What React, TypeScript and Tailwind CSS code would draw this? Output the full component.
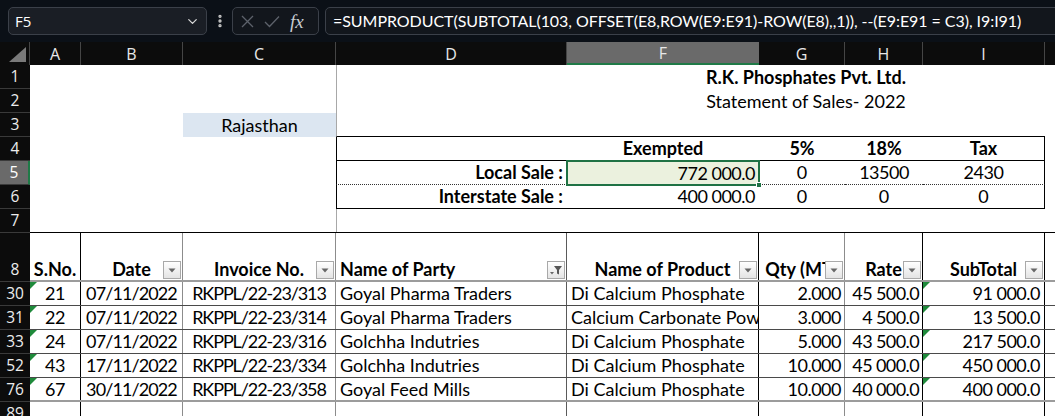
import { ChevronDown, EllipsisVertical } from 'lucide-react'

const ROWS = [
  { n: 30, sno: '21', date: '07/11/2022', inv: 'RKPPL/22-23/313', party: 'Goyal Pharma Traders', product: 'Di Calcium Phosphate', qty: '2.000', rate: '45 500.0', sub: '91 000.0' },
  { n: 31, sno: '22', date: '07/11/2022', inv: 'RKPPL/22-23/314', party: 'Goyal Pharma Traders', product: 'Calcium Carbonate Powder', qty: '3.000', rate: '4 500.0', sub: '13 500.0' },
  { n: 33, sno: '24', date: '07/11/2022', inv: 'RKPPL/22-23/316', party: 'Golchha Indutries', product: 'Di Calcium Phosphate', qty: '5.000', rate: '43 500.0', sub: '217 500.0' },
  { n: 52, sno: '43', date: '17/11/2022', inv: 'RKPPL/22-23/334', party: 'Golchha Indutries', product: 'Di Calcium Phosphate', qty: '10.000', rate: '45 000.0', sub: '450 000.0' },
  { n: 76, sno: '67', date: '30/11/2022', inv: 'RKPPL/22-23/358', party: 'Goyal Feed Mills', product: 'Di Calcium Phosphate', qty: '10.000', rate: '40 000.0', sub: '400 000.0' },
]

function RowHead({ children, className = '' }: { children: React.ReactNode; className?: string }) {
  return (
    <div className={`w-[30px] shrink-0 flex items-center justify-center border-b border-[#3a3a3a] bg-[#0c0c0c] font-['Open_Sans',sans-serif] text-[15.5px] text-[#ececec] ${className}`}>
      {children}
    </div>
  )
}

function FilterBtn({ active = false }: { active?: boolean }) {
  return (
    <span className="absolute right-[1px] bottom-[1px] w-[18px] h-[18px] border border-[#a9a9a9] bg-gradient-to-b from-white to-[#e4e4e4] flex items-center justify-center">
      {active ? (
        <svg width="14" height="12" viewBox="0 0 14 12">
          <path d="M1 8 h4 l-2 2.5z" fill="#666" />
          <path d="M5 2 h8 l-3 4 v4.5 l-2 -1 v-3.5z" fill="#555" />
        </svg>
      ) : (
        <svg width="8" height="5" viewBox="0 0 8 5">
          <path d="M0.5 0.5 h7 l-3.5 4z" fill="#666" />
        </svg>
      )}
    </span>
  )
}

function Tri() {
  return <span className="absolute left-0 top-0 w-0 h-0 border-t-[7px] border-r-[7px] border-t-[#1f8a3b] border-r-transparent" />
}

export default function App() {
  return (
    <div className="w-[1055px] h-[416px] overflow-hidden bg-white font-['Lato','Liberation_Sans',sans-serif] text-[18px] text-black">
      {/* ── formula bar ── */}
      <div className="h-[42px] bg-[#0b1017] flex items-center pl-[8px] font-['Open_Sans',sans-serif]">
        <div className="w-[199px] h-[28px] shrink-0 rounded-[5px] border border-[#3b4049] bg-[#1a1e25] flex items-center justify-between pl-[6px] pr-[6px] text-[15px] text-white">
          <span>F5</span>
          <ChevronDown size={15} color="#d8d8d8" />
        </div>
        <div className="w-[25px] shrink-0 flex justify-center">
          <EllipsisVertical size={16} color="#c8c8c8" strokeWidth={3} />
        </div>
        <div className="w-[87px] h-[28px] shrink-0 rounded-[5px] border border-[#3b4049] bg-[#12161c] flex items-center pl-[8px] gap-[10px]">
          <svg width="13" height="13" viewBox="0 0 13 13" stroke="#5d626b" strokeWidth="1.3" fill="none">
            <path d="M1 1 L12 12 M12 1 L1 12" />
          </svg>
          <svg width="16" height="13" viewBox="0 0 16 13" stroke="#5d626b" strokeWidth="1.3" fill="none">
            <path d="M1 7 L5.5 11.5 L15 1.5" />
          </svg>
          <span className="font-['Liberation_Serif',serif] italic text-[19px] text-[#c7cbd1] leading-none">fx</span>
        </div>
        <div className="ml-[6px] w-[760px] h-[28px] shrink-0 rounded-l-[5px] border border-[#3b4049] bg-[#12161c] flex items-center pl-[7px] font-['Lato',sans-serif] text-[16px] tracking-[-0.05px] text-white whitespace-nowrap">
          =SUMPRODUCT(SUBTOTAL(103, OFFSET(E8,ROW(E9:E91)-ROW(E8),,1)), --(E9:E91 = C3), I9:I91)
        </div>
      </div>

      {/* ── column headers ── */}
      <div className="h-[23px] flex bg-[#0c0c0c] text-[#e8e8e8] text-[16px] font-['Open_Sans',sans-serif]">
        <div className="w-[30px] shrink-0 relative border-r border-[#454545]">
          <span className="absolute right-[3px] bottom-[3px] w-0 h-0 border-b-[15px] border-l-[17px] border-b-[#7a7a7a] border-l-transparent" />
        </div>
        <div className="w-[51px] shrink-0 border-r border-[#454545] flex items-center justify-center">A</div>
        <div className="w-[102px] shrink-0 border-r border-[#454545] flex items-center justify-center">B</div>
        <div className="w-[153px] shrink-0 border-r border-[#454545] flex items-center justify-center">C</div>
        <div className="w-[231px] shrink-0 border-r border-[#454545] flex items-center justify-center">D</div>
        <div className="w-[192px] shrink-0 bg-[#6a6a6a] border-b-2 border-[#1f7a47] flex items-center justify-center">F</div>
        <div className="w-[86px] shrink-0 border-r border-[#454545] flex items-center justify-center">G</div>
        <div className="w-[78px] shrink-0 border-r border-[#454545] flex items-center justify-center">H</div>
        <div className="w-[122px] shrink-0 border-r border-[#454545] flex items-center justify-center">I</div>
        <div className="flex-1" />
      </div>

      {/* ── rows 1-3: title ── */}
      <div className="flex h-[24px]">
        <RowHead>1</RowHead>
        <div className="w-[306px] shrink-0" />
        <div className="w-[231px] shrink-0 border-l border-[#a8a8a8]" />
        <div className="w-[478px] shrink-0 flex items-center justify-center font-bold">R.K. Phosphates Pvt. Ltd.</div>
      </div>
      <div className="flex h-[24px]">
        <RowHead>2</RowHead>
        <div className="w-[306px] shrink-0" />
        <div className="w-[231px] shrink-0 border-l border-[#a8a8a8]" />
        <div className="w-[478px] shrink-0 flex items-center justify-center">Statement of Sales- 2022</div>
      </div>
      <div className="flex h-[24px]">
        <RowHead>3</RowHead>
        <div className="w-[153px] shrink-0" />
        <div className="w-[153px] shrink-0 bg-[#dce6f1] flex items-center justify-center">Rajasthan</div>
        <div className="w-[709px] shrink-0 border-l border-b border-l-[#a8a8a8] border-b-black" />
      </div>

      {/* ── rows 4-6: summary ── */}
      <div className="flex h-[24px]">
        <RowHead>4</RowHead>
        <div className="w-[306px] shrink-0" />
        <div className="w-[231px] shrink-0 border-l border-b border-black" />
        <div className="w-[192px] shrink-0 border-b border-black flex items-center justify-center font-bold">Exempted</div>
        <div className="w-[86px] shrink-0 border-b border-black flex items-center justify-center font-bold">5%</div>
        <div className="w-[78px] shrink-0 border-b border-black flex items-center justify-center font-bold">18%</div>
        <div className="w-[122px] shrink-0 border-b border-r border-black flex items-center justify-center font-bold">Tax</div>
      </div>
      <div className="flex h-[24px]">
        <RowHead className="bg-[#6a6a6a] border-r-2 border-r-[#1f7a47] text-white">5</RowHead>
        <div className="w-[306px] shrink-0" />
        <div className="w-[231px] shrink-0 border-l border-b border-l-black border-b-[#333] [border-bottom-style:dotted] flex items-center justify-end pr-[4px] font-bold">Local Sale :</div>
        <div className="w-[192px] shrink-0 relative bg-[#ebf1de] outline-2 outline-[#1f7244] -outline-offset-1 flex items-center justify-end pr-[4px] tracking-[-0.5px]">
          772 000.0
          <span className="absolute -right-[3px] -bottom-[3px] w-[6px] h-[6px] bg-[#1f7244] border border-white" />
        </div>
        <div className="w-[86px] shrink-0 border-b border-[#333] [border-bottom-style:dotted] flex items-center justify-center">0</div>
        <div className="w-[78px] shrink-0 border-b border-[#333] [border-bottom-style:dotted] flex items-center justify-center tracking-[-0.5px]">13500</div>
        <div className="w-[122px] shrink-0 border-b border-r border-b-[#333] border-r-black [border-bottom-style:dotted] flex items-center justify-center tracking-[-0.5px]">2430</div>
      </div>
      <div className="flex h-[24px]">
        <RowHead>6</RowHead>
        <div className="w-[306px] shrink-0" />
        <div className="w-[231px] shrink-0 border-l border-b border-black flex items-center justify-end pr-[4px] font-bold">Interstate Sale :</div>
        <div className="w-[192px] shrink-0 border-b border-black flex items-center justify-end pr-[4px] tracking-[-0.5px]">400 000.0</div>
        <div className="w-[86px] shrink-0 border-b border-black flex items-center justify-center">0</div>
        <div className="w-[78px] shrink-0 border-b border-black flex items-center justify-center">0</div>
        <div className="w-[122px] shrink-0 border-b border-r border-black flex items-center justify-center">0</div>
      </div>
      <div className="flex h-[24px]">
        <RowHead>7</RowHead>
        <div className="flex flex-1 border-b border-black">
          <div className="w-[306px] shrink-0" />
          <div className="w-[231px] shrink-0 border-l border-[#a8a8a8]" />
        </div>
      </div>

      {/* ── row 8: table header ── */}
      <div className="flex h-[49px] font-bold leading-[21px]">
        <RowHead className="items-end pb-[1px] font-normal">8</RowHead>
        <div className="flex flex-1 border-b-2 border-[#9c9c9c]">
          <div className="w-[51px] shrink-0 border-r border-black flex items-end justify-center">S.No.</div>
          <div className="w-[102px] shrink-0 relative border-r border-[#8c8c8c] flex items-end justify-center">Date<FilterBtn /></div>
          <div className="w-[153px] shrink-0 relative border-r border-[#8c8c8c] flex items-end justify-center">Invoice No.<FilterBtn /></div>
          <div className="w-[231px] shrink-0 relative border-r border-[#5a5a5a] flex items-end pl-[4px]">Name of Party<FilterBtn active /></div>
          <div className="w-[192px] shrink-0 relative border-r border-black flex items-end justify-center">Name of Product<FilterBtn /></div>
          <div className="w-[86px] shrink-0 relative overflow-hidden border-r border-[#8c8c8c] flex items-end justify-center whitespace-nowrap">Qty (MT)<FilterBtn /></div>
          <div className="w-[78px] shrink-0 relative border-r border-black flex items-end justify-center">Rate<FilterBtn /></div>
          <div className="w-[122px] shrink-0 relative border-r border-black flex items-end justify-center">SubTotal<FilterBtn /></div>
          <div className="flex-1" />
        </div>
      </div>

      {/* ── filtered data rows ── */}
      {ROWS.map((r, i) => (
        <div key={r.n} className="flex h-[24px]">
          <RowHead className="text-[#7fd0f2]">{r.n}</RowHead>
          <div className={`flex flex-1 whitespace-nowrap ${i === ROWS.length - 1 ? 'border-b-2 border-[#9c9c9c]' : 'border-b border-[#4a4a4a]'}`}>
            <div className="w-[51px] shrink-0 relative border-r border-black flex items-center justify-center tracking-[-0.5px]"><Tri />{r.sno}</div>
            <div className="w-[102px] shrink-0 border-r border-[#8c8c8c] flex items-center justify-center tracking-[-0.9px]">{r.date}</div>
            <div className="w-[153px] shrink-0 border-r border-[#8c8c8c] flex items-center justify-center tracking-[-1.1px]">{r.inv}</div>
            <div className="w-[231px] shrink-0 border-r border-[#5a5a5a] flex items-center pl-[4px]">{r.party}</div>
            <div className="w-[192px] shrink-0 overflow-hidden border-r border-black flex items-center pl-[4px]">{r.product}</div>
            <div className="w-[86px] shrink-0 border-r border-[#8c8c8c] flex items-center justify-end pr-[3px] tracking-[-0.5px]">{r.qty}</div>
            <div className="w-[78px] shrink-0 border-r border-black flex items-center justify-end pr-[3px] tracking-[-0.6px]">{r.rate}</div>
            <div className="w-[122px] shrink-0 relative border-r border-black flex items-center justify-end pr-[4px] tracking-[-0.5px]"><Tri />{r.sub}</div>
            <div className="flex-1" />
          </div>
        </div>
      ))}

      {/* ── row 89 ── */}
      <div className="flex h-[24px]">
        <RowHead className="items-start">89</RowHead>
        <div className="flex flex-1">
          <div className="w-[51px] shrink-0 border-r border-black" />
          <div className="w-[102px] shrink-0 border-r border-[#8c8c8c]" />
          <div className="w-[153px] shrink-0 border-r border-[#8c8c8c]" />
          <div className="w-[231px] shrink-0 border-r border-[#5a5a5a]" />
          <div className="w-[192px] shrink-0 border-r border-black" />
          <div className="w-[86px] shrink-0 border-r border-[#8c8c8c]" />
          <div className="w-[78px] shrink-0 border-r border-black" />
          <div className="w-[122px] shrink-0 border-r border-black" />
        </div>
      </div>
    </div>
  )
}
